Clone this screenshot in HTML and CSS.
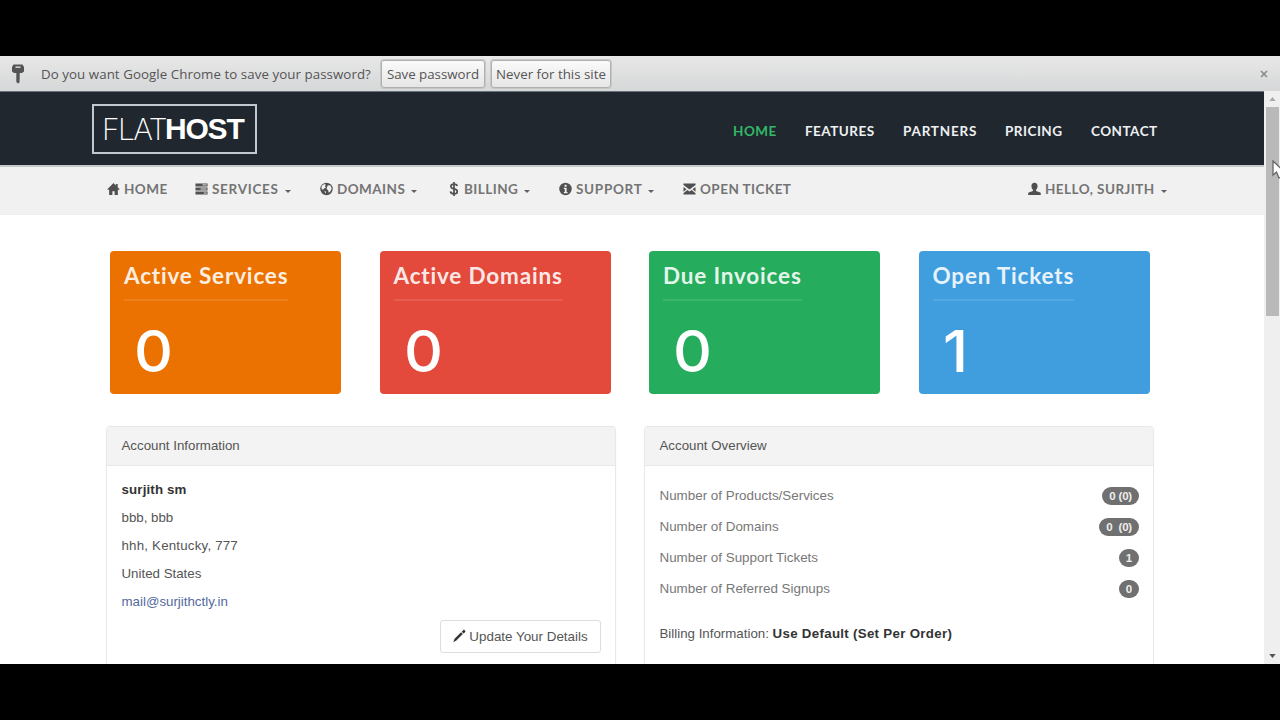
FILE: index.html
```html
<!DOCTYPE html>
<html lang="en">
<head>
<meta charset="utf-8">
<title>FlatHost - Client Area</title>
<link rel="stylesheet" href="styles.css">
</head>
<body>
<div class="screen">
  <div class="infobar">
    <svg class="key" viewBox="0 0 14 20"><path d="M2.500 0.500h9L13 3v4.500L11 9H8.800l-.3 9.500-1.500 1-1.700-1.500V9H3L1 7.500V3z" fill="#555"/><path d="M4.500 3.200h5" stroke="#ccc" stroke-width="1.600"/></svg>
    <span class="question">Do you want Google Chrome to save your password?</span>
    <button class="chrome-btn save">Save password</button>
    <button class="chrome-btn never">Never for this site</button>
    <svg class="close" viewBox="0 0 8 8"><path d="M1 1l6 6M7 1L1 7" stroke="#888" stroke-width="1.500"/></svg>
  </div>
  <div class="viewport">
    <div class="page">
      <header class="header">
        <a class="logo"><span class="flat">FLAT</span><b class="host">HOST</b></a>
        <nav class="main-nav">
          <a class="active">HOME</a><a>FEATURES</a><a class="partners">PARTNERS</a><a>PRICING</a><a>CONTACT</a>
        </nav>
      </header>
      <nav class="subnav">
        <a><svg class="icon" viewBox="0 0 14 14"><path d="M7 .5L.3 7.200l1 1L2.300 7.300V13.500h3.500V9.500h2.400v4h3.500V7.300l1 .9 1-1L11.500 5V1.500h-2v1.600z"/></svg><span>HOME</span></a>
        <a><svg class="icon" viewBox="0 0 14 14"><path d="M.5 1h13v3.200H.5zM.5 5.400h13v3.200H.5zM.5 9.800h13V13H.5z"/><path d="M8 2.600h4.500M6 7h6.500M9.500 11.400h3" stroke="#f1f1f1"/></svg><span class="t-services">SERVICES</span><i class="caret"></i></a>
        <a><svg class="icon" viewBox="0 0 14 14"><circle cx="7" cy="7" r="6.700"/><path d="M2 3.500l2.500-1.800 1.800.8-1 1.500 1.200 1.300-1.800 1L3 8.200 1.400 6zM8.500 3l2.800.3 1.300 3.200-1.300 3-1.800 1.600-.8-2.800-1.500-1.200.4-2.200zM4.500 9l2 1-.3 2.200z" fill="#f1f1f1"/></svg><span>DOMAINS</span><i class="caret"></i></a>
        <a><svg class="icon dollar" viewBox="0 0 10 14"><path d="M8.200 4C8 2.700 6.800 2.200 5 2.200 3 2.200 1.900 3 1.900 4.400c0 3.400 6.400 1.500 6.400 5 0 1.500-1.200 2.400-3.300 2.400-2 0-3.300-.8-3.500-2.500M5 0v14" fill="none" stroke="#505050" stroke-width="1.700"/></svg><span>BILLING</span><i class="caret"></i></a>
        <a><svg class="icon" viewBox="0 0 14 14"><circle cx="7" cy="7" r="6.700"/><path d="M6 2.500h2.200v2H6zM5.200 5.600h3v4.600h1v1.300h-4v-1.300h1V6.900h-1z" fill="#f1f1f1"/></svg><span class="t-support">SUPPORT</span><i class="caret"></i></a>
        <a><svg class="icon" viewBox="0 0 14 14"><path d="M.5 1h13v1.800L7 7.500.5 2.800zM.5 4.800l3.300 2.500L.5 10zM13.500 4.800l-3.300 2.500 3.300 2.700zM.5 12.900v-1.400l4.200-3.300L7 9.700l2.300-1.500 4.200 3.300v1.400z"/></svg><span>OPEN TICKET</span></a>
        <a><svg class="icon" viewBox="0 0 14 14"><path d="M7 .3c2.200 0 3.300 1.400 3.300 3.500 0 1.600-.6 3.200-1.600 4v1.400l4.600 1.600c.4.300.5 1.200.5 2.700H.2c0-1.500.1-2.400.5-2.700l4.600-1.600V7.800c-1-.8-1.600-2.400-1.600-4C3.700 1.700 4.800.3 7 .3z"/></svg><span>HELLO, SURJITH</span><i class="caret"></i></a>
      </nav>
      <main>
        <section class="stats">
          <article class="stat orange"><h2>Active Services</h2><strong>0</strong></article>
          <article class="stat red"><h2>Active Domains</h2><strong>0</strong></article>
          <article class="stat green"><h2>Due Invoices</h2><strong>0</strong></article>
          <article class="stat blue"><h2>Open Tickets</h2><strong>1</strong></article>
        </section>
        <section class="panels">
          <article class="panel">
            <h3>Account Information</h3>
            <div class="details">
              <b>surjith sm</b>
              <span>bbb, bbb</span>
              <span class="wide">hhh, Kentucky, 777</span>
              <span>United States</span>
              <a>mail@surjithctly.in</a>
            </div>
            <button class="update"><svg viewBox="0 0 14 14"><path d="M.3 13.700L1.700 10l7-7L10.600 4.900l-7 7zM9.400 2.300L11 .7c.5-.5 1-.4 1.500 0l.6.6c.5.500.4 1 0 1.500l-1.600 1.600z"/></svg>Update Your Details</button>
          </article>
          <article class="panel">
            <h3>Account Overview</h3>
            <ul class="overview">
              <li>Number of Products/Services<span class="badge">0 (0)</span></li>
              <li>Number of Domains<span class="badge">0&nbsp; (0)</span></li>
              <li>Number of Support Tickets<span class="badge">1</span></li>
              <li>Number of Referred Signups<span class="badge">0</span></li>
            </ul>
            <p class="billing">Billing Information: <b>Use Default (Set Per Order)</b></p>
          </article>
        </section>
      </main>
    </div>
    <div class="scrollbar">
      <svg class="arrow" viewBox="0 0 8 5"><path d="M0 5l4-5 4 5z" fill="#aaa"/></svg>
      <div class="thumb"></div>
      <svg class="arrow down" viewBox="0 0 8 5"><path d="M0 0h8L4 5z" fill="#555"/></svg>
    </div>
  </div>
  <svg class="cursor" viewBox="0 0 8 20"><path d="M1 1v14l3.500-3 2.500 6 3-1V9.500z" fill="#fff" stroke="#666" stroke-width="1.300"/></svg>
</div>
</body>
</html>
```
FILE: styles.css
```css
* { box-sizing: border-box; }
body { margin: 0; background: #000; font-family: "Liberation Sans", Arial, sans-serif; font-size: 13.4px; color: #555; }
.screen { position: relative; width: 1280px; height: 720px; padding: 56px 0; overflow: hidden; background: #000; }
button { font: inherit; margin: 0; padding: 0; white-space: nowrap; }
svg { display: block; flex: none; }
.infobar { height: 35px; display: flex; align-items: center; padding: 0 12px 0 11px; background: linear-gradient(#e8e8e8, #d5d7d8); font-family: "Open Sans", "Noto Sans", sans-serif; font-size: 13.3px; color: #555; }
.key { width: 14px; height: 20px; margin-right: 16px; }
.question { width: 340px; white-space: nowrap; letter-spacing: .065px; }
.chrome-btn { height: 28px; border: 1px solid #b0b0b0; border-radius: 3px; background: linear-gradient(#fafafa, #e6e6e6); color: #555; box-shadow: 0 0 0 1px #c8c8c8; }
.save { width: 104px; margin-right: 6px; letter-spacing: -.02px; }
.never { width: 120px; letter-spacing: 0; }
.close { width: 8px; height: 8px; margin-left: auto; }
.viewport { height: 573px; display: flex; }
.page { width: 1264px; background: #fff; overflow: hidden; }
.header { height: 76px; display: flex; align-items: center; padding-left: 92px; background: #20272f; border-top: 1px solid #68707a; border-bottom: 2px solid #c6c8cc; }
.logo { width: 165px; height: 50px; margin-top: 1px; display: flex; align-items: center; padding-left: 8px; border: 2px solid #c3c8cf; color: #fff; line-height: 46px; }
.flat { width: 63px; font-family: Inter, sans-serif; font-weight: 200; letter-spacing: -1.6px; font-size: 30px; }
.host { letter-spacing: -1.2px; font-size: 30px; }
.main-nav { margin-left: 476px; padding-top: 4px; display: grid; grid-template-columns: 72px 98px 102px 86px 70px; font: 700 13.500px Lato, sans-serif; color: #eef0f2; letter-spacing: .48px; }
.partners { letter-spacing: .8px; }
.main-nav .active { color: #32b867; }
.subnav { height: 48px; display: grid; grid-template-columns: 88px 125px 129px 110px 124px 345px 150px; padding: 0 0 3px 107px; background: #f1f1f1; border-bottom: 1px solid #eee; font: 700 13.500px Lato, sans-serif; color: #747474; }
.subnav a { display: flex; align-items: center; white-space: nowrap; }
.subnav span { letter-spacing: .45px; }
.subnav .t-services { letter-spacing: .7px; }
.subnav .t-support { letter-spacing: .7px; }
.icon { width: 13px; height: 14px; margin-right: 4px; fill: #505050; }
.dollar { width: 10px; margin-right: 5px; }
.caret { margin: 4px 0 0 6px; border: solid transparent; border-width: 3px 3.500px 0; border-top-color: #606060; }
.stats { display: grid; grid-template-columns: repeat(4, 231px); gap: 38.500px; padding: 36px 0 0 110px; }
.stat { height: 143px; padding: 10px 14px; border-radius: 4px; color: #fff; }
.orange { background: #eb7201; }
.red { background: #e44a3b; }
.green { background: #25ac5c; }
.blue { background: #409edf; }
.stat h2 { width: max-content; height: 40px; margin: 0; border-bottom: 2px solid rgba(255,255,255,.1); font: 700 22.500px/29px Lato, sans-serif; letter-spacing: .82px; white-space: nowrap; color: rgba(255,255,255,.9); }
.stat strong { display: block; width: max-content; margin: 16px 0 0 10px; font: 500 57px/70px Inter, sans-serif; transform: scaleX(1.06); transform-origin: left; }
.panels { display: grid; grid-template-columns: 510px 510px; gap: 28px; padding: 32px 0 0 106px; }
.panel { height: 260px; border: 1px solid #e8e8e8; border-radius: 4px; box-shadow: 0 0 1px #e5e5e5; }
.panel h3 { height: 39px; margin: 0; padding: 0 14.500px; background: #f3f3f3; border-bottom: 1px solid #e8e8e8; font-size: 13.300px; line-height: 38px; font-weight: 400; }
.details { display: grid; grid-auto-rows: 28.200px; align-items: center; padding: 9px 14.500px 0; font-size: 13.300px; }
.details b { color: #333; letter-spacing: .15px; }
.billing b { color: #333; letter-spacing: .3px; }
.wide { letter-spacing: .2px; }
.details a { color: #526a9e; }
.update { width: 161px; height: 33px; margin: 4px 14px 0 auto; display: flex; align-items: center; justify-content: center; gap: 3px; border: 1px solid #ddd; border-radius: 3px; background: #fff; color: #555; }
.update svg { width: 13px; height: 14px; fill: #333; }
.overview { list-style: none; margin: 0; padding: 14px 14px 0 14.500px; color: #777; }
.overview li { height: 31px; display: flex; align-items: center; justify-content: space-between; }
.badge { padding: 0 7px; height: 18px; border-radius: 9px; background: #707070; color: #eee; font-size: 11.500px; line-height: 18px; font-weight: 700; letter-spacing: -.2px; }
.billing { margin: 21px 14.500px 0; line-height: 18px; font-size: 13.300px; }
.scrollbar { width: 16px; display: flex; flex-direction: column; align-items: center; padding: 6px 0; background: #efefef; }
.arrow { width: 7px; height: 4px; }
.thumb { width: 13px; height: 209px; margin-top: 6px; background: #b9b9b9; }
.down { margin-top: auto; }
.cursor { position: absolute; right: 0; top: 160px; width: 8px; height: 20px; }
```
